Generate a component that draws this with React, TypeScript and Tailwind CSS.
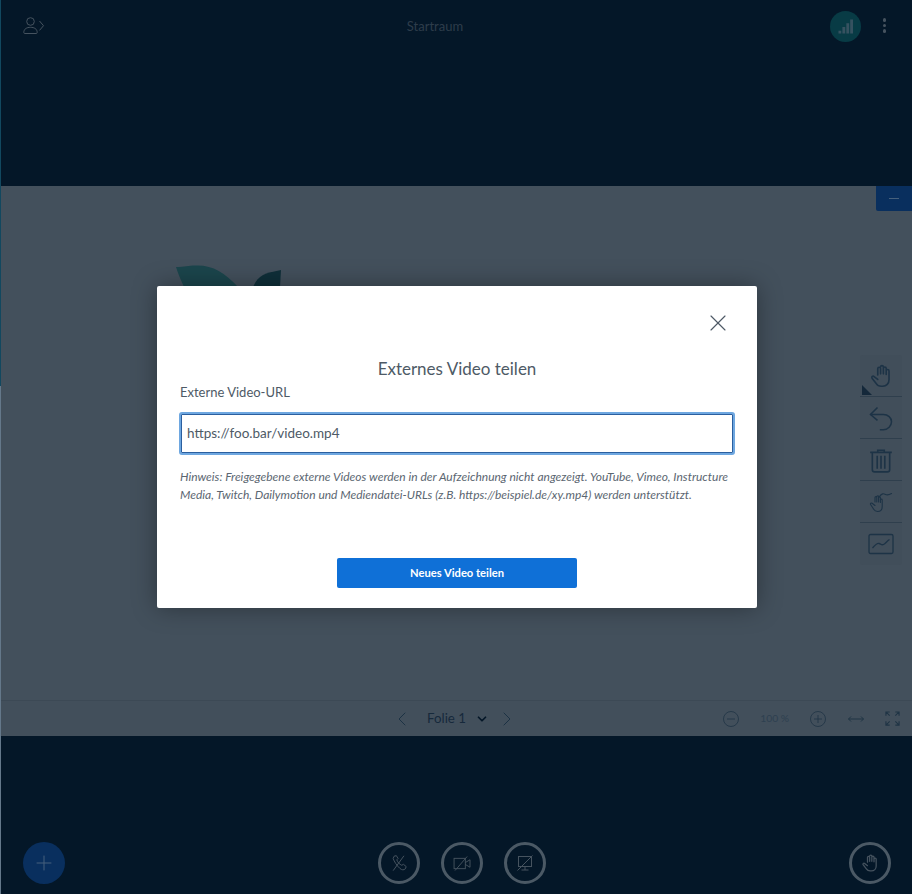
import { ChevronDown, ChevronLeft, ChevronRight, Plus, X } from 'lucide-react'
import type { ReactNode } from 'react'

const font = "font-['Lato','Noto_Sans',sans-serif]"

function UserListIcon() {
  return (
    <svg viewBox="0 0 22 18" fill="none" stroke="#46535f" strokeWidth="1" className="h-[18px] w-[22px]" aria-hidden>
      <circle cx="7.5" cy="4.5" r="3.8" />
      <path d="M.8 15.5c0-3.6 3-5.2 6.7-5.2s6.7 1.6 6.7 5.2c0 .6-.4 1-1 1H1.800c-.6 0-1-.4-1-1Z" />
      <path d="m16.500 4 4 4.700-4 4.700" />
    </svg>
  )
}

function SignalIcon() {
  return (
    <svg viewBox="0 0 16 16" fill="#365260" className="h-[15px] w-[15px]" aria-hidden>
      <rect x="0.500" y="12.500" width="3" height="3" />
      <rect x="4.700" y="8.500" width="3" height="7" />
      <rect x="8.900" y="4.500" width="3" height="11" />
      <rect x="13" y="0.500" width="3" height="15" />
    </svg>
  )
}

function ToolButton({ children, last = false }: { children: ReactNode; last?: boolean }) {
  return (
    <div className={`relative flex h-[42px] items-center justify-center ${last ? '' : 'border-b border-[#2f3f4d]'}`}>
      {children}
    </div>
  )
}

function HandIcon({ className, stroke = '#1d3346' }: { className: string; stroke?: string }) {
  return (
    <svg viewBox="0 0 24 24" fill="none" stroke={stroke} strokeWidth="1.500" strokeLinecap="round" strokeLinejoin="round" className={className} aria-hidden>
      <path d="M9 11V5.200a1.300 1.300 0 0 1 2.600 0V10m0-6.300a1.300 1.300 0 0 1 2.600 0V10m0-5a1.300 1.300 0 0 1 2.600 0v5.500m0-3.200a1.300 1.300 0 0 1 2.600 0v8.200c0 3.400-2.400 6-5.800 6h-1.400c-2.200 0-3.600-.9-4.800-2.700L3.700 14c-.7-1.200.8-2.400 1.900-1.500L9 15.200" />
    </svg>
  )
}

function CallButton({ children }: { children: ReactNode }) {
  return (
    <div className="flex h-[42px] w-[42px] items-center justify-center rounded-full border-[3px] border-[#4b5965]">
      {children}
    </div>
  )
}

export default function App() {
  return (
    <div className={`relative flex h-[894px] w-[912px] flex-col overflow-hidden bg-[#041728] pl-px ${font}`}>
      {/* the sliver of the page edge showing at x=0 */}
      <div className="absolute left-0 top-0 flex h-full w-px flex-col">
        <span className="h-[386px] bg-[#12485f]" />
        <span className="flex-1 bg-[#64788a]" />
      </div>

      {/* top bar */}
      <header className="flex h-[186px] shrink-0 items-start justify-between pl-[22px] pr-[24px] pt-[11px]">
        <div className="flex h-[30px] w-[100px] items-center">
          <UserListIcon />
        </div>
        <div className="pt-[6px] text-[13px] leading-[18px] text-[#2e3d4b]">Startraum</div>
        <div className="flex w-[141px] items-start justify-end gap-[20px]">
          <div className="flex h-[31px] w-[31px] items-center justify-center rounded-full bg-[#083b45]">
            <SignalIcon />
          </div>
          <div className="flex w-[7px] flex-col items-center gap-[2px] pt-[7px]">
            <span className="h-[3.500px] w-[3.500px] rounded-full bg-[#46535f]" />
            <span className="h-[3.500px] w-[3.500px] rounded-full bg-[#46535f]" />
            <span className="h-[3.500px] w-[3.500px] rounded-full bg-[#46535f]" />
          </div>
        </div>
      </header>

      {/* presentation */}
      <main className="relative flex h-[550px] shrink-0 flex-col bg-[#43505c]">
        <div className="relative flex-1 overflow-hidden">
          <svg viewBox="0 0 110 22" className="absolute left-[174px] top-[79px] h-[22px] w-[110px]" aria-hidden>
            <path d="M1 2c10-.5 14-2 22-1.500C38 .5 50 8 63 22H9C6 15 3 9 1 2Z" fill="#1b454c" />
            <path d="M106 5c-8 1.500-14 3-18 5-5 3-8 7-10 12h27l1-17Z" fill="#0f2f39" />
          </svg>

          <button className="absolute right-0 top-0 flex h-[25px] w-9 items-center justify-center rounded-bl-[2px] bg-[#092f5e]">
            <span className="h-px w-[10px] bg-[#46607c]" />
          </button>

          <div className="absolute right-[10px] top-[169px] w-[42px] rounded-[3px] bg-[#414e5a]">
            <ToolButton>
              <HandIcon className="h-[26px] w-[26px]" />
              <span className="absolute bottom-[1px] left-[2px] h-0 w-0 border-b-[10px] border-r-[10px] border-b-[#14283a] border-r-transparent" />
            </ToolButton>
            <ToolButton>
              <svg viewBox="0 0 24 24" fill="none" stroke="#1d3346" strokeWidth="1.300" className="h-[28px] w-[28px]" aria-hidden>
                <path d="M9 3 3 9l6 5" />
                <path d="M3 9h11c4 0 7 2.800 7 6.200S18 22 14 22h-3" />
              </svg>
            </ToolButton>
            <ToolButton>
              <svg viewBox="0 0 24 24" fill="none" stroke="#1d3346" strokeWidth="1.500" className="h-[26px] w-[26px]" aria-hidden>
                <path d="M2 5h20M9 5V3h6v2M4 5v16a2 2 0 0 0 2 2h12a2 2 0 0 0 2-2V5M8.500 8v12M12 8v12M15.500 8v12" />
              </svg>
            </ToolButton>
            <ToolButton>
              <svg viewBox="0 0 24 24" fill="none" stroke="#1d3346" strokeWidth="1.100" strokeLinecap="round" className="h-6 w-6" aria-hidden>
                <path d="M10 7c3-4 4.500-3.500 6.500-2.500s3.500.5 6-1" />
                <path strokeLinejoin="round" d="M6 12V7.500a.9.9 0 0 1 1.800 0V12m0-5.300a.9.9 0 0 1 1.800 0V12m0-4.200a.9.9 0 0 1 1.800 0V12.500m0-2.500a.9.9 0 0 1 1.800 0v6.500c0 3-1.800 5-4.500 5H8.500c-1.800 0-2.900-.7-3.800-2.200L1.600 14.500c-.5-1 .6-1.900 1.500-1.200L6 15.500" />
              </svg>
            </ToolButton>
            <ToolButton last>
              <svg viewBox="0 0 26 22" fill="none" stroke="#1d3346" strokeWidth="1.300" className="h-[22px] w-[26px]" aria-hidden>
                <rect x="1" y="1.500" width="24" height="19" rx="1.500" />
                <path d="M4.500 15c3-3.500 4.500-5 6.500-4.500s2.500 2 4.500 1 3.500-3.500 6-5" />
              </svg>
            </ToolButton>
          </div>
        </div>

        {/* slide controls */}
        <div className="grid h-[36px] shrink-0 grid-cols-[1fr_auto_1fr] items-center border-t border-[#3c4955] bg-[#424f5b]">
          <div />
          <div className="flex items-center pr-[4px] text-[#16293b]">
            <ChevronLeft className="h-6 w-6 text-[#1c3244]" strokeWidth={1} />
            <span className="ml-[13px] pb-[2px] text-[13.300px] leading-[18px]">Folie 1</span>
            <ChevronDown className="ml-[9px] h-[14px] w-[14px] text-[#041728]" strokeWidth={3} />
            <ChevronRight className="ml-[6px] h-6 w-6 text-[#1c3244]" strokeWidth={1} />
          </div>
          <div className="flex items-center justify-end pr-[12px] text-[#1f3445]">
            <svg viewBox="0 0 16 16" fill="none" stroke="currentColor" strokeWidth="0.800" className="h-4 w-4" aria-hidden>
              <circle cx="8" cy="8" r="7.500" />
              <path d="M4 8h8" />
            </svg>
            <span className="ml-[21px] text-[10.300px] text-[#2e4050]">100 %</span>
            <svg viewBox="0 0 16 16" fill="none" stroke="currentColor" strokeWidth="0.800" className="ml-[21px] h-4 w-4" aria-hidden>
              <circle cx="8" cy="8" r="7.500" />
              <path d="M4 8h8M8 4v8" />
            </svg>
            <svg viewBox="0 0 16 8" fill="none" stroke="currentColor" strokeWidth="1" className="ml-[22px] h-2 w-4" aria-hidden>
              <path d="M.5 4h15M3 1.500.5 4 3 6.500M13 1.500 15.500 4 13 6.500" />
            </svg>
            <svg viewBox="0 0 16 16" fill="none" stroke="currentColor" strokeWidth="1.200" className="ml-[21px] h-[15px] w-[15px]" aria-hidden>
              <path d="M1 5V1h4M1 1l4 4M11 1h4v4M15 1l-4 4M1 11v4h4M1 15l4-4M15 11v4h-4M15 15l-4-4" />
            </svg>
          </div>
        </div>
      </main>

      {/* actions bar */}
      <footer className="grid h-[158px] shrink-0 grid-cols-[355px_168px_1fr] items-end pb-[10px] pl-[22px] pr-[21px]">
        <div className="flex h-[42px] w-[42px] items-center justify-center rounded-full bg-[#092f5e]">
          <Plus className="h-[24px] w-[24px] text-[#46607c]" strokeWidth={1} />
        </div>
        <div className="flex gap-[21px]">
          <CallButton>
            <svg viewBox="0 0 20 20" fill="none" stroke="#46535f" strokeWidth="1.100" className="h-[18px] w-[18px]" aria-hidden>
              <path d="M4.500 2.500 7 1.800 9 5 7.500 6.500C8.500 9 10.500 11.500 13 12.500l2-1 3 2.500-1 2.500c-1.500 1.500-4 1.500-6-.5C7.500 13 4.500 8 3.500 5Z" />
              <path d="M15.500 2 3.500 18.500" />
            </svg>
          </CallButton>
          <CallButton>
            <svg viewBox="0 0 20 16" fill="none" stroke="#46535f" strokeWidth="1" className="h-[15px] w-[19px]" aria-hidden>
              <rect x="1" y="2.500" width="12" height="11" />
              <path d="m13 7 5-3v8l-5-3M15 .5 2 15.500" />
            </svg>
          </CallButton>
          <CallButton>
            <svg viewBox="0 0 16 16" fill="none" stroke="#46535f" strokeWidth="1" className="h-4 w-4" aria-hidden>
              <rect x="1.500" y="1.500" width="13" height="10" />
              <path d="M4.500 15h7M8 11.500V15M15.500 .5 .5 15.500" />
            </svg>
          </CallButton>
        </div>
        <div className="flex justify-end">
          <CallButton>
            <HandIcon className="h-[20px] w-[20px]" stroke="#46535f" />
          </CallButton>
        </div>
      </footer>

      {/* dialog */}
      <div className="absolute inset-0 flex items-center justify-center pl-[2px]">
        <div className="flex h-[322px] w-[600px] flex-col rounded-[2px] bg-white px-[23px] shadow-[0_0_24px_rgba(0,0,0,0.35)]">
          <div className="flex h-[56px] justify-end pr-[2px] pt-[23px]">
            <X className="h-[28px] w-[28px] text-[#4e5a66]" strokeWidth={1} />
          </div>
          <h2 className="mt-[16px] text-center text-[17px] font-normal leading-[22px] text-[#4e5a66]">Externes Video teilen</h2>
          <label className="mt-[3px] text-[13px] leading-[18px] text-[#4e5a66]">Externe Video-URL</label>
          <div className="-ml-px mt-[11px] flex h-[43px] w-[556px] shrink-0 items-center rounded-[3px] border-2 border-[#6ea7e0] px-[6px] text-[13.500px] text-[#4e5a66] shadow-[inset_0_0_0_1px_#2b5f9f]">
            https://foo.bar/video.mp4
          </div>
          <p className="mt-[13px] text-[12px] italic leading-[18px] text-[#5b6671]">
            Hinweis: Freigegebene externe Videos werden in der Aufzeichnung nicht angezeigt. YouTube, Vimeo, Instructure Media, Twitch, Dailymotion und Mediendatei-URLs (z.B. https://beispiel.de/xy.mp4) werden unterstützt.
          </p>
          <button className="mx-auto mt-[54px] h-[30px] w-[240px] rounded-[2px] bg-[#0f70d7] text-[11.200px] font-bold text-white">
            Neues Video teilen
          </button>
        </div>
      </div>
    </div>
  )
}
